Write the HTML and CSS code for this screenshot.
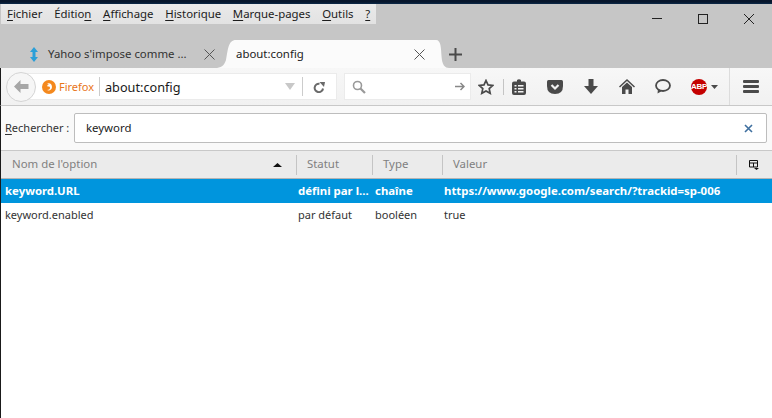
FILE: index.html
```html
<!DOCTYPE html>
<html lang="fr">
<head>
<meta charset="utf-8">
<title>about:config</title>
<link rel="stylesheet" href="styles.css">
</head>
<body>
<div class="top-edge"></div>
<div class="chrome">
  <div class="title-row">
    <nav class="menubar">
      <span><u>F</u>ichier</span><span>Éditio<u>n</u></span><span><u>A</u>ffichage</span><span><u>H</u>istorique</span><span><u>M</u>arque-pages</span><span><u>O</u>utils</span><span><u>?</u></span>
    </nav>
    <div class="winctl">
      <svg width="12" height="12" viewBox="0 0 12 12"><path d="M1 5.5h10" stroke="#222" fill="none"/></svg>
      <svg width="12" height="12" viewBox="0 0 12 12"><rect x="1.5" y="1.5" width="9" height="9" stroke="#222" fill="none"/></svg>
      <svg width="12" height="12" viewBox="0 0 12 12"><path d="M1 1l10 10M11 1L1 11" stroke="#222" fill="none"/></svg>
    </div>
  </div>
  <div class="tabs">
    <div class="tab">
      <svg class="fav" width="8" height="15" viewBox="0 0 8 15"><path d="M4 0L8 5H5.500V10H8L4 15 0 10H2.500V5H0z" fill="#2b9fd8"/></svg>
      <span class="tab-label">Yahoo s'impose comme ...</span>
      <svg class="tabx" width="11" height="11" viewBox="0 0 11 11"><path d="M.5.500l10 10M10.500.500l-10 10" stroke="#555" fill="none"/></svg>
    </div>
    <svg class="curve" width="21" height="28" viewBox="0 0 21 28"><path d="M0 28C6 28 9 26 11 20 13 10 13 0 21 0V28z" fill="#fbfbfb"/></svg>
    <div class="tab active">
      <span class="tab-label">about:config</span>
      <svg class="tabx" width="11" height="11" viewBox="0 0 11 11"><path d="M.5.500l10 10M10.500.500l-10 10" stroke="#555" fill="none"/></svg>
    </div>
    <svg class="curve" width="13" height="28" viewBox="0 0 13 28"><path d="M0 0C5 0 5 8 5.500 16 6 25 9 28 13 28H0z" fill="#fbfbfb"/></svg>
    <svg class="newtab" width="13" height="13" viewBox="0 0 13 13"><path d="M6.500 0v13M0 6.500h13" stroke="#4a4a4a" stroke-width="2" fill="none"/></svg>
  </div>
</div>
<div class="navbar">
  <div class="back">
    <svg width="15" height="13" viewBox="0 0 15 13"><path d="M6.500 0L0 6.500 6.500 13V9h8V4h-8z" fill="#a6a6a6"/></svg>
  </div>
  <div class="urlbar">
    <svg class="fx" width="14" height="14" viewBox="0 0 14 14"><circle cx="7" cy="7" r="7" fill="#f4891e"/><path d="M5 3.500c3-1 5 .5 5 3.500s-3 4-5 3c2 0 3-1 3-2.300 0-1-1-1.500-2.500-1.200C5 5.500 5.500 4.500 7 4.300 6.300 3.800 5.600 3.700 5 3.500z" fill="#fff"/></svg>
    <span class="fx-name">Firefox</span>
    <span class="url">about:config</span>
    <svg class="drop" width="10" height="7" viewBox="0 0 10 7"><path d="M0 0h10L5 7z" fill="#c8c8c8"/></svg>
    <span class="reload-wrap"><svg width="12" height="12" viewBox="0 0 12 12"><path d="M10 7.500A4.200 4.200 0 1 1 6.500 2.800" stroke="#6a6a6a" stroke-width="2" fill="none"/><path d="M6.500 1H12L11 6z" fill="#6a6a6a"/></svg></span>
  </div>
  <div class="searchbar">
    <svg width="14" height="14" viewBox="0 0 14 14"><circle cx="5.500" cy="5.500" r="4" stroke="#999" stroke-width="1.600" fill="none"/><path d="M8.500 8.500L13 13" stroke="#999" stroke-width="2.200"/></svg>
    <svg width="10" height="9" viewBox="0 0 10 9"><path d="M0 4.500h8M5.500 1l3.500 3.500L5.500 8" stroke="#888" stroke-width="1.500" fill="none"/></svg>
  </div>
  <div class="tools">
    <svg class="t-star" width="16" height="16" viewBox="0 0 16 16"><path d="M8 1.500l2 4.400 4.800.5-3.600 3.200 1 4.700L8 11.900l-4.200 2.400 1-4.700L1.200 6.400 6 5.900z" stroke="#4a4a4a" stroke-width="1.700" fill="none"/></svg>
    <i class="vsep"></i>
    <svg class="t-list" width="14" height="16" viewBox="0 0 14 16"><path d="M2 2.500h3V1q2-1.500 4 0v1.500h3q2 0 2 2V14q0 2-2 2H2q-2 0-2-2V4.500q0-2 2-2z" fill="#4a4a4a"/><path d="M2.500 6h2v1.500h-2zM6 6h5.500v1.500H6zM2.500 9h2v1.500h-2zM6 9h5.500v1.500H6zM2.500 12h2v1.500h-2zM6 12h5.500v1.500H6z" fill="#f3f3f3"/></svg>
    <svg class="t-pocket" width="16" height="14" viewBox="0 0 16 14"><path d="M1.500 0h13Q16 0 16 1.500V6q0 8-8 8T0 6V1.500Q0 0 1.500 0z" fill="#4a4a4a"/><path d="M4.500 5L8 8.500 11.500 5" stroke="#f3f3f3" stroke-width="2.200" fill="none"/></svg>
    <svg class="t-down" width="14" height="15" viewBox="0 0 14 15"><path d="M4.500 0h5v7H14l-7 8-7-8h4.500z" fill="#4a4a4a"/></svg>
    <svg class="t-home" width="16" height="15" viewBox="0 0 16 15"><path d="M8 0l8 7.500-1 1L8 2 1 8.500l-1-1z" fill="#4a4a4a"/><path d="M8 3.500l5 4.500v7H9.500v-4.500h-3V15H3V8z" fill="#4a4a4a"/></svg>
    <svg class="t-chat" width="16" height="15" viewBox="0 0 16 15"><ellipse cx="8" cy="6.500" rx="7" ry="5.500" stroke="#4a4a4a" stroke-width="1.800" fill="none"/><path d="M3 10l-.5 4.500L7 12z" fill="#4a4a4a"/></svg>
    <div class="abp"><span class="abp-badge">ABP</span><svg width="7" height="4" viewBox="0 0 7 4"><path d="M0 0h7L3.500 4z" fill="#4a4a4a"/></svg></div>
    <div class="menu-btn"><i></i><i></i><i></i></div>
  </div>
</div>
<div class="search-row">
  <label class="search-label"><u>R</u>echercher :</label>
  <div class="filter">
    <span class="filter-text">keyword</span>
    <svg width="9" height="9" viewBox="0 0 9 9"><path d="M1 1l7 7M8 1L1 8" stroke="#3f6f9f" stroke-width="1.600" fill="none"/></svg>
  </div>
</div>
<div class="table">
  <div class="thead">
    <div class="th th-name"><span class="th-label">Nom de l'option</span><svg width="9" height="4" viewBox="0 0 9 4"><path d="M4.500 0L9 4H0z" fill="#111"/></svg></div>
    <div class="th">Statut</div>
    <div class="th">Type</div>
    <div class="th">Valeur</div>
    <div class="th th-pick"><svg width="10" height="10" viewBox="0 0 10 10"><path d="M.5 .5h8v6.500h-8zM.5 3h8M4.500 3v4" stroke="#111" fill="none"/><path d="M5 8h5L7.500 10z" fill="#111"/></svg></div>
  </div>
  <div class="tr selected"><span>keyword.URL</span><span>défini par l...</span><span>chaîne</span><span>https://www.google.com/search/?trackid=sp-006</span></div>
  <div class="tr"><span>keyword.enabled</span><span>par défaut</span><span>booléen</span><span>true</span></div>
</div>
</body>
</html>
```

FILE: styles.css
```css
* { box-sizing: border-box; }
html, body { margin: 0; height: 100%; overflow: hidden; }
body {
  background: #fff;
  color: #222;
  font: 11.4px "Noto Sans", sans-serif;
  display: flex;
  flex-direction: column;
}
u { text-underline-offset: 2px; }
.top-edge { height: 4px; background: linear-gradient(#06162c 50%, #0b2a4a); flex: none; }
.chrome { background: #c6c6c6; height: 64px; flex: none; }
.title-row { height: 36px; display: flex; justify-content: space-between; align-items: flex-start; }
.menubar {
  margin-left: 1px;
  width: 375px;
  height: 20px;
  background: linear-gradient(#eaeaea, #e2e2e2);
  display: flex;
  align-items: center;
  padding: 0 0 1px 6px;
  gap: 11.7px;
  color: #1c1c1c;
  white-space: nowrap;
}
.winctl { display: flex; gap: 34px; margin: 9px 17px 0 0; }
.tabs { display: flex; height: 28px; padding-left: 21px; align-items: stretch; }
.tab { width: 194px; display: flex; align-items: center; padding-left: 9px; color: #333; }
.fav { margin-right: 10px; flex: none; }
.tab-label { flex: 1; white-space: nowrap; padding-bottom: 2px; }
.tabx { flex: none; }
.tab.active { width: 200px; padding-left: 0; background: #fbfbfb; color: #222; }
.tab.active .tabx { margin-right: 11px; }
.curve { flex: none; }
.newtab { align-self: center; margin-left: 0; }
.navbar {
  height: 38px;
  flex: none;
  display: flex;
  align-items: center;
  background: linear-gradient(#f7f7f7, #f1f1f1);
  border-bottom: 1px solid #c8c8c8;
  border-left: 1px solid #1a1a1a;
  padding-left: 5px;
}
.back {
  width: 30px; height: 30px; border-radius: 50%;
  background: #f6f6f6; border: 1px solid #d4d4d4;
  display: flex; align-items: center; justify-content: center;
  flex: none; z-index: 1;
}
.urlbar {
  width: 317px; height: 27px; margin-left: -16px; padding-left: 21px;
  background: #fff; border: 1px solid #ebebeb;
  display: flex; align-items: center;
}
.fx { flex: none; }
.fx-name { color: #e8761a; margin-left: 3px; border-right: 1px solid #ccc; line-height: 19px; width: 41px; flex: none; font-size: 11px; }
.url { font-size: 12.7px; margin-left: 5px; flex: 1; color: #1a1a1a; padding-top: 1px; }
.drop { margin-right: 7px; flex: none; }
.reload-wrap { border-left: 1px solid #ccc; height: 19px; padding: 0 11px 0 10px; display: flex; align-items: center; }
.searchbar {
  width: 127px; height: 27px; margin-left: 7px;
  background: #fff; border: 1px solid #ebebeb;
  display: flex; align-items: center; justify-content: space-between;
  padding: 0 5px 0 7px;
}
.tools { display: flex; align-items: center; height: 100%; flex: 1; }
.tools > svg { flex: none; }
.t-star { margin-left: 7px; }
.vsep { width: 1px; height: 16px; background: #c4c4c4; margin-left: 9px; }
.t-list { margin-left: 8px; }
.t-pocket { margin-left: 21px; }
.t-down { margin-left: 21px; }
.t-home { margin-left: 21px; }
.t-chat { margin-left: 20px; }
.abp { display: flex; align-items: center; gap: 4px; margin-left: 20px; }
.abp-badge {
  width: 16px; height: 16px; border-radius: 50%;
  background: #c40000; color: #fff; font: bold 8px/16px "Liberation Sans", sans-serif;
  text-align: center; letter-spacing: -.3px; white-space: nowrap;
}
.menu-btn {
  margin-left: 11px; height: 100%; border-left: 1px solid #dcdcdc;
  padding-left: 13px;
  display: flex; flex-direction: column; justify-content: center; gap: 2px;
}
.menu-btn i { display: block; width: 16px; height: 3px; background: #4a4a4a; border-radius: 1px; }
.search-row {
  height: 44px; flex: none;
  display: flex; align-items: center;
  background: #f9f9f9;
  border-left: 1px solid #1a1a1a;
  padding: 0 5px 0 4px;
  gap: 4px;
}
.search-label { color: #333; width: 65px; flex: none; white-space: nowrap; padding-bottom: 2px; font-size: 11px; }
.filter {
  flex: 1; height: 30px; background: #fff; border: 1px solid #bdbdbd; border-radius: 2px;
  display: flex; align-items: center; justify-content: space-between;
  padding: 0 13px 0 11px;
}
.filter-text { padding-bottom: 2px; }
.table { flex: 1; border-left: 1px solid #1a1a1a; }
.thead, .tr { display: grid; grid-template-columns: 296px 76px 70px 294px 1fr; }
.thead {
  height: 29px; background: #ebebeb;
  border-top: 1px solid #c8c8c8; border-bottom: 1px solid #b4b4b4;
  align-items: center; color: #7f7f7f;
}
.th { padding-left: 10px; height: 20px; line-height: 18px; border-right: 1px solid #c4c4c4; }
.th:last-child { border-right: 0; }
.th-name { display: flex; justify-content: space-between; align-items: center; padding-left: 11px; padding-right: 14px; }
.th-label { padding-bottom: 2px; }
.th-pick { display: flex; align-items: center; padding-left: 12px; }
.tr { height: 24px; align-items: center; color: #333; font-size: 11px; }
.tr span { white-space: nowrap; padding-bottom: 2px; }
.tr span:nth-child(1) { padding-left: 4px; }
.tr span:nth-child(2) { padding-left: 1px; }
.tr span:nth-child(3) { padding-left: 2px; }
.tr span:nth-child(4) { padding-left: 1px; }
.tr.selected { background: #0095dd; color: #fff; font-weight: 700; font-size: 11.4px; }
```
